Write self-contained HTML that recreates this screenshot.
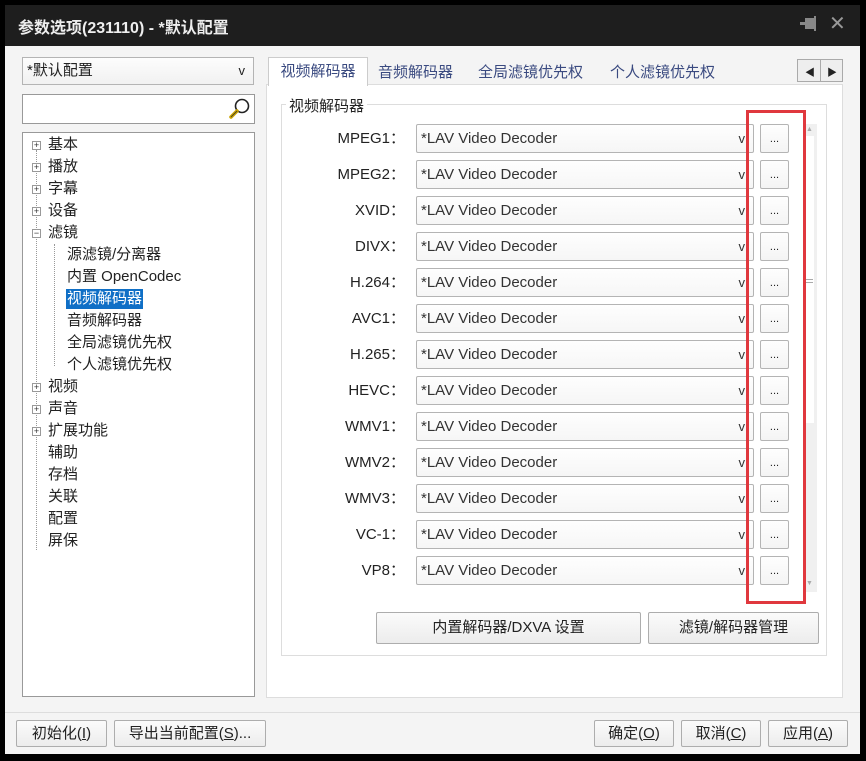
<!DOCTYPE html>
<html><head><meta charset="utf-8"><style>
*{box-sizing:border-box;margin:0;padding:0}
body{width:866px;height:761px;background:#000;position:relative;overflow:hidden;font-family:"Liberation Sans","Noto Sans CJK SC",sans-serif;font-size:15px;color:#222}
.a{position:absolute}
.btn{position:absolute;border:1px solid #adadad;background:linear-gradient(#fbfbfb,#ececec);border-radius:2px;text-align:center;font-size:15px;color:#222}
.cb{position:absolute;left:416px;width:338px;height:29px;border:1px solid #b4b4b4;background:linear-gradient(#fefefe,#f6f6f6);border-radius:2px;padding-left:4px;line-height:27px;font-size:15px;color:#333}
.cb span{position:absolute;right:8px;top:0;font-size:13px}
.lb{position:absolute;width:104px;left:301px;text-align:right;font-size:15px;color:#222;height:29px;line-height:29px}
.dots{position:absolute;left:760px;width:29px;height:29px;border:1px solid #b4b4b4;background:linear-gradient(#fefefe,#f4f4f4);border-radius:2px;font-size:11px;text-align:center;line-height:28px}
.ti{position:absolute;font-size:15px;line-height:20px}
.pm{position:absolute;width:9px;height:9px;border:1px solid #999;background:#fff;font-size:9px;line-height:7px;text-align:center;color:#333}
</style></head><body>
<div class="a" style="left:5px;top:5px;width:855px;height:41px;background:#1e1e1e"></div>
<div class="a" style="left:18px;top:14px;color:#eee;font-size:16px;font-weight:bold">参数选项(231110) - *默认配置</div>
<svg class="a" style="left:800px;top:16px" width="18" height="16"><rect x="5" y="2" width="9" height="11" fill="#888"/><rect x="0" y="6" width="6" height="3" fill="#888"/><rect x="14" y="0" width="2" height="15" fill="#888"/></svg>
<div class="a" style="left:829px;top:11px;color:#999;font-size:20px">✕</div>
<div class="a" style="left:5px;top:46px;width:855px;height:708px;background:#f4f4f4"></div>
<div class="a" style="left:5px;top:712px;width:855px;height:1px;background:#ddd"></div>

<div class="a" style="left:22px;top:57px;width:232px;height:28px;border:1px solid #b4b4b4;background:linear-gradient(#fdfdfd,#f1f1f1);padding-left:4px;line-height:26px;font-size:15px">*默认配置<span style="position:absolute;right:8px;font-size:13px">v</span></div>
<div class="a" style="left:22px;top:94px;width:233px;height:30px;border:1px solid #999;background:#fff"></div>
<svg class="a" style="left:227px;top:96px" width="26" height="26"><circle cx="15" cy="10" r="6.5" fill="#fff" stroke="#222" stroke-width="1.6"/><line x1="10" y1="15" x2="4" y2="21" stroke="#c9a200" stroke-width="3.5" stroke-linecap="round"/><line x1="10" y1="15" x2="4" y2="21" stroke="#333" stroke-width="0.8"/></svg>
<div class="a" style="left:22px;top:132px;width:233px;height:565px;border:1px solid #999;background:#fff"></div>
<div class="a" style="left:36px;top:150px;height:400px;border-left:1px dotted #999"></div>
<div class="a" style="left:54px;top:244px;height:122px;border-left:1px dotted #999"></div>
<div class="ti" style="left:48px;top:135px">基本</div><div class="pm" style="left:32px;top:141px">+</div>
<div class="ti" style="left:48px;top:157px">播放</div><div class="pm" style="left:32px;top:163px">+</div>
<div class="ti" style="left:48px;top:179px">字幕</div><div class="pm" style="left:32px;top:185px">+</div>
<div class="ti" style="left:48px;top:201px">设备</div><div class="pm" style="left:32px;top:207px">+</div>
<div class="ti" style="left:48px;top:223px">滤镜</div><div class="pm" style="left:32px;top:229px">−</div>
<div class="ti" style="left:67px;top:245px">源滤镜/分离器</div>
<div class="ti" style="left:67px;top:267px">内置 OpenCodec</div>
<div class="ti" style="left:66px;top:289px;background:#0f6fc6;color:#fff;padding:0 1px">视频解码器</div>
<div class="ti" style="left:67px;top:311px">音频解码器</div>
<div class="ti" style="left:67px;top:333px">全局滤镜优先权</div>
<div class="ti" style="left:67px;top:355px">个人滤镜优先权</div>
<div class="ti" style="left:48px;top:377px">视频</div><div class="pm" style="left:32px;top:383px">+</div>
<div class="ti" style="left:48px;top:399px">声音</div><div class="pm" style="left:32px;top:405px">+</div>
<div class="ti" style="left:48px;top:421px">扩展功能</div><div class="pm" style="left:32px;top:427px">+</div>
<div class="ti" style="left:48px;top:443px">辅助</div>
<div class="ti" style="left:48px;top:465px">存档</div>
<div class="ti" style="left:48px;top:487px">关联</div>
<div class="ti" style="left:48px;top:509px">配置</div>
<div class="ti" style="left:48px;top:531px">屏保</div>

<div class="a" style="left:266px;top:84px;width:577px;height:614px;border:1px solid #ddd;background:#fff"></div>
<div class="a" style="left:268px;top:57px;width:100px;height:29px;border:1px solid #ccc;border-bottom:none;background:#fff;color:#3a4a80;font-size:15px;text-align:center;line-height:27px">视频解码器</div>
<div class="a" style="left:378px;top:61px;color:#3a4a80;font-size:15px">音频解码器</div>
<div class="a" style="left:478px;top:61px;color:#3a4a80;font-size:15px">全局滤镜优先权</div>
<div class="a" style="left:610px;top:61px;color:#3a4a80;font-size:15px">个人滤镜优先权</div>
<div class="a" style="left:797px;top:59px;width:46px;height:23px;border:1px solid #aaa;background:#eee"></div>
<div class="a" style="left:820px;top:59px;width:1px;height:23px;background:#aaa"></div>
<div class="a" style="left:805px;top:64px;font-size:10px">◀</div>
<div class="a" style="left:827px;top:64px;font-size:10px">▶</div>

<div class="a" style="left:281px;top:104px;width:546px;height:552px;border:1px solid #ddd"></div>
<div class="a" style="left:286px;top:95px;background:#fff;padding:0 3px;font-size:15px">视频解码器</div>
<div class="a" style="left:804px;top:124px;width:13px;height:468px;background:#f0f0f0"></div>
<div class="a" style="left:804px;top:136px;width:10px;height:287px;background:#fff"></div>
<div class="a" style="left:806px;top:126px;font-size:7px;color:#aaa">▲</div>
<div class="a" style="left:806px;top:580px;font-size:7px;color:#aaa">▼</div>
<div class="a" style="left:806px;top:279px;width:7px;height:4px;border-top:1px solid #aaa;border-bottom:1px solid #aaa"></div>

<div class="lb" style="top:124px">MPEG1：</div><div class="cb" style="top:124px">*LAV Video Decoder<span>v</span></div><div class="dots" style="top:124px">...</div>
<div class="lb" style="top:160px">MPEG2：</div><div class="cb" style="top:160px">*LAV Video Decoder<span>v</span></div><div class="dots" style="top:160px">...</div>
<div class="lb" style="top:196px">XVID：</div><div class="cb" style="top:196px">*LAV Video Decoder<span>v</span></div><div class="dots" style="top:196px">...</div>
<div class="lb" style="top:232px">DIVX：</div><div class="cb" style="top:232px">*LAV Video Decoder<span>v</span></div><div class="dots" style="top:232px">...</div>
<div class="lb" style="top:268px">H.264：</div><div class="cb" style="top:268px">*LAV Video Decoder<span>v</span></div><div class="dots" style="top:268px">...</div>
<div class="lb" style="top:304px">AVC1：</div><div class="cb" style="top:304px">*LAV Video Decoder<span>v</span></div><div class="dots" style="top:304px">...</div>
<div class="lb" style="top:340px">H.265：</div><div class="cb" style="top:340px">*LAV Video Decoder<span>v</span></div><div class="dots" style="top:340px">...</div>
<div class="lb" style="top:376px">HEVC：</div><div class="cb" style="top:376px">*LAV Video Decoder<span>v</span></div><div class="dots" style="top:376px">...</div>
<div class="lb" style="top:412px">WMV1：</div><div class="cb" style="top:412px">*LAV Video Decoder<span>v</span></div><div class="dots" style="top:412px">...</div>
<div class="lb" style="top:448px">WMV2：</div><div class="cb" style="top:448px">*LAV Video Decoder<span>v</span></div><div class="dots" style="top:448px">...</div>
<div class="lb" style="top:484px">WMV3：</div><div class="cb" style="top:484px">*LAV Video Decoder<span>v</span></div><div class="dots" style="top:484px">...</div>
<div class="lb" style="top:520px">VC-1：</div><div class="cb" style="top:520px">*LAV Video Decoder<span>v</span></div><div class="dots" style="top:520px">...</div>
<div class="lb" style="top:556px">VP8：</div><div class="cb" style="top:556px">*LAV Video Decoder<span>v</span></div><div class="dots" style="top:556px">...</div>

<div class="a" style="left:746px;top:110px;width:60px;height:494px;border:3px solid #e0383e"></div>

<div class="btn" style="left:376px;top:612px;width:265px;height:32px;line-height:30px">内置解码器/DXVA 设置</div>
<div class="btn" style="left:648px;top:612px;width:171px;height:32px;line-height:30px">滤镜/解码器管理</div>

<div class="btn" style="left:16px;top:720px;width:91px;height:27px;line-height:25px">初始化(<u>I</u>)</div>
<div class="btn" style="left:114px;top:720px;width:152px;height:27px;line-height:25px">导出当前配置(<u>S</u>)...</div>
<div class="btn" style="left:594px;top:720px;width:80px;height:27px;line-height:25px">确定(<u>O</u>)</div>
<div class="btn" style="left:681px;top:720px;width:80px;height:27px;line-height:25px">取消(<u>C</u>)</div>
<div class="btn" style="left:768px;top:720px;width:80px;height:27px;line-height:25px">应用(<u>A</u>)</div>
</body></html>
